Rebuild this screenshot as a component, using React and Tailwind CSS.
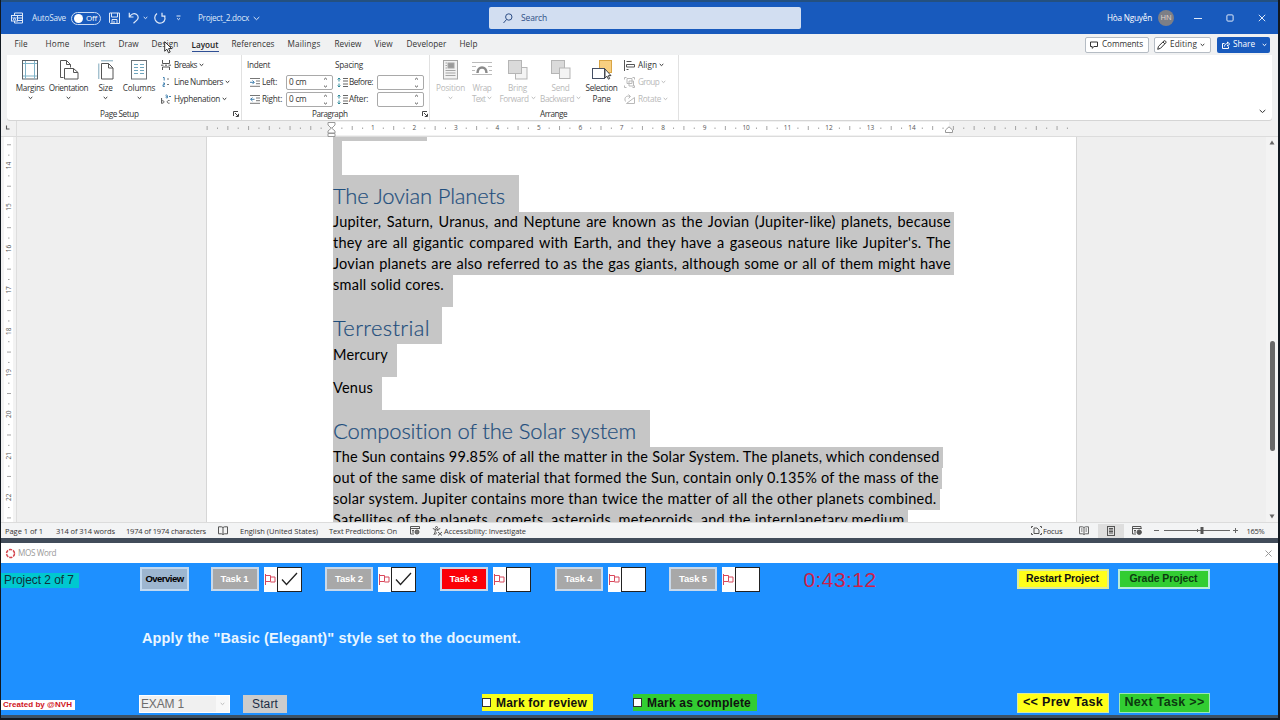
import React, { useLayoutEffect, useRef } from "react";

/* Text run whose tracking is measured so that it fills exactly `w` pixels. */
function Fit({ w, className = "", children }) {
  const ref = useRef(null);
  useLayoutEffect(() => {
    const el = ref.current;
    el.style.letterSpacing = "0px";
    const natural = el.getBoundingClientRect().width;
    el.style.letterSpacing = `${(w - natural) / el.textContent.length}px`;
  }, [w, children]);
  return (
    <span ref={ref} className={`inline-block shrink-0 whitespace-pre ${className}`}>
      {children}
    </span>
  );
}

function Icon({ w, h, className = "", children }) {
  return (
    <svg width={w} height={h} viewBox={`0 0 ${w} ${h}`} fill="none" stroke="currentColor" strokeWidth="1" className={`shrink-0 ${className}`}>
      {children}
    </svg>
  );
}

const Chevron = ({ className = "" }) => (
  <Icon w={5} h={4} className={className}>
    <path d="M0.7 1l1.8 1.6L4.3 1" />
  </Icon>
);

const Launcher = ({ className = "" }) => (
  <Icon w={6} h={6} className={`text-[#444] ${className}`}>
    <path d="M0.5 5V0.5H5M2 2l3 3M5.5 2.8v2.7H2.8" />
  </Icon>
);

function TitleBar() {
  return (
    <div className="flex h-8 items-center bg-[#185abd] text-[#dfe9f8]">
      <Icon w={12} h={12} className="ml-[10px]">
        <path d="M3.5 3V1h8v10h-8V9M5 3.5h6M7 6h4M7 8.5h4" />
        <rect x="0.5" y="3.5" width="6" height="5.5" />
        <path d="M1.8 5l.8 2.8.9-2.4.9 2.4.8-2.8" strokeWidth="0.8" />
      </Icon>
      <Fit w={34} className="ml-[9px] text-[8.2px]">AutoSave</Fit>
      <div className="ml-[5px] flex h-[13px] w-[30px] items-center rounded-full border border-[#c9daf3] pl-[2px]">
        <span className="h-[9px] w-[9px] rounded-full bg-white" />
        <Fit w={11} className="ml-[3px] text-[8px] text-white">Off</Fit>
      </div>
      <Icon w={11} h={12} className="ml-2">
        <path d="M0.5 1h10v10.5h-9L0.5 10.500zM2.500 1v4h6V1M3 11.500V7.500h5v4M5 9v2" />
      </Icon>
      <Icon w={12} h={12} className="ml-2">
        <path d="M1.300 0.800v4.200h4.200M1.500 4.800C3 2 6 0.800 8.300 2.300c2.500 1.600 2.300 4.200.6 5.800L5.500 11.300" strokeWidth="1.200" />
      </Icon>
      <Chevron className="ml-[3px]" />
      <Icon w={12} h={12} className="ml-[6px]">
        <path d="M8 0.700v3.500h3.500M3 1.500C1 3 .3 5.500 1.300 8c1.200 2.800 4.500 4 7.200 2.500 2.700-1.500 3.200-4.700 1.500-6.800" strokeWidth="1.200" />
      </Icon>
      <Icon w={5} h={6} className="ml-[10px]">
        <path d="M0.500 1h4M1 3.300l1.500 1.400L4 3.300" />
      </Icon>
      <Fit w={51} className="ml-[17px] text-[8.2px]">Project_2.docx</Fit>
      <Icon w={7} h={5} className="ml-1">
        <path d="M0.700 1l2.800 2.700L6.300 1" />
      </Icon>
      <div className="ml-[229px] flex h-[22px] w-[312px] items-center rounded-[2px] bg-[#d2def1] text-[#2f4f86]">
        <Icon w={10} h={11} className="ml-[14px]">
          <circle cx="5.800" cy="4" r="3.200" />
          <path d="M3.500 6.500L0.500 10" />
        </Icon>
        <Fit w={26} className="ml-[8px] text-[8.5px]">Search</Fit>
      </div>
      <Fit w={45} className="ml-[306px] text-[8.2px] text-white">Hòa Nguyễn</Fit>
      <div className="ml-[6px] flex h-4 w-4 items-center justify-center rounded-full bg-[#7d7f86] text-[7.5px] text-[#e2d9cf]">HN</div>
      <Icon w={8} h={8} className="ml-5">
        <path d="M0 4.500h8" />
      </Icon>
      <Icon w={8} h={8} className="ml-6">
        <rect x="0.900" y="0.900" width="6.200" height="6.200" rx="1" />
      </Icon>
      <Icon w={8} h={8} className="ml-6">
        <path d="M0.800 0.800l6.400 6.400M7.200 0.800L0.800 7.200" />
      </Icon>
    </div>
  );
}

function TabRow() {
  return (
    <div className="relative flex h-[21px] items-center bg-[#f0f1f2] text-[8.2px] text-[#333]">
      <Fit w={13} className="ml-[13.500px]">File</Fit>
      <Fit w={24} className="ml-[18px]">Home</Fit>
      <Fit w={22} className="ml-[14px]">Insert</Fit>
      <Fit w={20} className="ml-[13px]">Draw</Fit>
      <Fit w={27} className="ml-[13px]">Design</Fit>
      <div className="ml-[13px] flex h-[17px] flex-col justify-end self-end pb-[3px]">
        <Fit w={27} className="leading-[12px] font-semibold text-[#222]">Layout</Fit>
        <span className="h-[1.500px] w-[27px] bg-[#2f4f95]" />
      </div>
      <Fit w={43} className="ml-[13px]">References</Fit>
      <Fit w={33} className="ml-[13px]">Mailings</Fit>
      <Fit w={27} className="ml-[14px]">Review</Fit>
      <Fit w={18} className="ml-[13px]">View</Fit>
      <Fit w={40} className="ml-[14px]">Developer</Fit>
      <Fit w={18} className="ml-[13px]">Help</Fit>
      <div className="ml-[607.500px] flex h-4 w-16 items-center rounded-[2px] border border-[#b5bcc4] bg-white">
        <Icon w={8} h={8} className="ml-[4px]">
          <path d="M0.500 1h7v4.500H4L2.200 7.300V5.500H0.500z" />
        </Icon>
        <Fit w={41} className="ml-[4px]">Comments</Fit>
      </div>
      <div className="ml-[5px] flex h-4 w-[57px] items-center rounded-[2px] border border-[#b5bcc4] bg-white">
        <Icon w={10} h={10} className="ml-[2px]">
          <path d="M0.700 9.300l.8-3L7 .9c1-.7 2.500.7 1.900 1.800L3.500 8.300zM6 2l1.900 1.900" />
        </Icon>
        <Fit w={27} className="ml-[3px]">Editing</Fit>
        <Chevron className="ml-[3px]" />
      </div>
      <div className="ml-[6px] flex h-4 w-[53px] items-center rounded-[2px] bg-[#185abd] text-white">
        <Icon w={8} h={8} className="ml-[5px]">
          <path d="M2.500 2.500h-2v5h6V5.500M2.500 5.500C2.500 3.500 4 2.500 5.500 2.500V1l2.200 2-2.200 2V3.800" />
        </Icon>
        <Fit w={22} className="ml-[3px]">Share</Fit>
        <Chevron className="ml-[7px]" />
      </div>
      <svg width="9" height="13" viewBox="0 0 9 13" className="absolute top-[7px] left-[163px]">
        <path d="M0.700 0.700v9.500l2.200-2 1.600 3.600 1.700-.8-1.600-3.400h3z" fill="#fff" stroke="#222" strokeWidth="0.900" />
      </svg>
    </div>
  );
}

function BigButton({ className = "", icon, children }) {
  return (
    <div className={`flex shrink-0 flex-col items-center pt-[5px] leading-[11px] ${className}`}>
      <div className="flex h-[21.500px] items-start">{icon}</div>
      {children}
    </div>
  );
}

function SmallButton({ icon, label, w, className = "" }) {
  return (
    <div className={`flex h-[17.300px] items-center ${className}`}>
      {icon}
      <Fit w={w} className="ml-[3px]">{label}</Fit>
      <Chevron className="ml-[2px]" />
    </div>
  );
}

function GroupLabel({ label, w, className }) {
  return (
    <div className="flex h-3 items-center">
      <Fit w={w} className={className}>{label}</Fit>
    </div>
  );
}

function Spinner({ value }) {
  return (
    <div className="flex h-[15px] w-[47px] items-center justify-between rounded-[2px] border border-[#a9a9a9] bg-white px-[2px]">
      {value ? <Fit w={17.5}>{value}</Fit> : <span />}
      <Icon w={5} h={11} className="mr-[2px] text-[#555]">
        <path d="M1 2.500L2.500 1.200 4 2.500M1 8.700l1.500 1.300L4 8.700" />
      </Icon>
    </div>
  );
}

const IndentIcon = ({ flip }) => (
  <Icon w={10} h={9} className="text-[#777]">
    <path d="M0 0.500h10M6 3h4M6 5.700h4M0 8.300h10" />
    <path d={flip ? "M4.500 4.300H0.500M2.500 2.500L.7 4.300l1.800 1.800" : "M0 4.300h4M2.500 2.500l1.800 1.800-1.800 1.800"} stroke="#3f7fae" />
  </Icon>
);

const SpacingIcon = () => (
  <Icon w={11} h={11} className="text-[#666]">
    <path d="M6 1.500h5M6 4h5M6 7h5M6 9.500h5" />
    <path d="M2 1v3.500M2 6.500V10M.6 2.400L2 1l1.400 1.400M.6 8.600L2 10l1.400-1.400" stroke="#2f8a9a" />
  </Icon>
);

function PageSetup() {
  return (
    <div className="flex w-[235px] flex-col border-r border-[#e1e1e1]">
      <div className="flex h-[53px] text-[#333]">
        <BigButton className="ml-[5px] w-9" icon={
          <Icon w={16} h={20} className="text-[#5b6166]">
            <rect x="0.500" y="0.500" width="15" height="18.500" />
            <path d="M3.500 1v18M12.500 1v18M1 3.500h14M1 16h14" stroke="#7fb3c8" />
          </Icon>}>
          <Fit w={28.5}>Margins</Fit>
          <Chevron className="mt-[3px]" />
        </BigButton>
        <BigButton className="w-[41px]" icon={
          <Icon w={20} h={20} className="text-[#555]">
            <path d="M4.500 17.500H1.500V0.500h6l4 4v3M7.500.5v4h4" />
            <path d="M5.500 8.500h9l4.500 4v6.500H5.500zM14.500 8.500v4H19" fill="#fff" />
          </Icon>}>
          <Fit w={39.5}>Orientation</Fit>
          <Chevron className="mt-[3px]" />
        </BigButton>
        <BigButton className="w-[33px]" icon={
          <Icon w={16} h={20} className="text-[#555]">
            <path d="M3.500 3.500h7l4.500 4.500v11H3.500zM10.500 3.500v4.500H15" />
            <path d="M3 .8h12M.8 3.500V19" stroke="#7fa9bd" />
          </Icon>}>
          <Fit w={14}>Size</Fit>
          <Chevron className="mt-[3px]" />
        </BigButton>
        <BigButton className="w-[34px]" icon={
          <Icon w={16} h={20} className="text-[#6b7075]">
            <rect x="0.500" y="0.500" width="15" height="18.500" />
            <path d="M3 4.500h4M9 4.500h4M3 7.500h4M9 7.500h4M3 10.500h4M9 10.500h4M3 13.500h4M9 13.500h4" stroke="#6fa5bd" />
          </Icon>}>
          <Fit w={32.5}>Columns</Fit>
          <Chevron className="mt-[3px]" />
        </BigButton>
        <div className="ml-[5px] flex flex-col pt-[1.500px]">
          <SmallButton label="Breaks" w={23} icon={
            <Icon w={10} h={10} className="text-[#555]">
              <path d="M1.500 0v3.500h7V0M1.500 10V7h7v3M0 5.200h2.500M4 5.200h2M7.500 5.200H10" />
            </Icon>} />
          <SmallButton label="Line Numbers" w={49} icon={
            <Icon w={10} h={10} className="text-[#3f7fae]">
              <path d="M2 .5h1.200v3M2 6h1.500v1.700H2v1.700h1.800" />
              <path d="M6 2h2M6 7.500h2" stroke="#777" />
            </Icon>} />
          <SmallButton label="Hyphenation" w={46} icon={
            <Icon w={10} h={10} className="text-[#555]">
              <path d="M.6 4v5.500M.6 7c2.500-1.500 3.700 2.500 0 2.200M8.500 6.500c-3-.6-3 3.200 0 2.700" />
              <path d="M4.500 1.300c1.500-.7 2 0 2 1v1.500c-2 .5-2.400-1.300 0-1.500M8 2.500h2" stroke="#3f7fae" />
            </Icon>} />
        </div>
      </div>
      <div className="flex items-center">
        <GroupLabel label="Page Setup" w={38.5} className="ml-[93px]" />
        <Launcher className="ml-[94px]" />
      </div>
    </div>
  );
}

function Paragraph() {
  return (
    <div className="flex w-[188px] flex-col border-r border-[#e1e1e1]">
      <div className="flex h-[53px] flex-col pt-[1.500px] text-[#333]">
        <div className="flex h-[17.300px] items-center">
          <Fit w={23} className="ml-[5px]">Indent</Fit>
          <Fit w={28} className="ml-[65px]">Spacing</Fit>
        </div>
        <div className="flex h-[17.300px] items-center pl-2">
          <IndentIcon />
          <Fit w={15} className="mr-[9px] ml-[2px]">Left:</Fit>
          <Spinner value="0 cm" />
          <div className="ml-[4px] flex items-center"><SpacingIcon /></div>
          <Fit w={24} className="mr-[4px] ml-[1px]">Before:</Fit>
          <Spinner />
        </div>
        <div className="flex h-[17.300px] items-center pl-2">
          <IndentIcon flip />
          <Fit w={20} className="mr-[4px] ml-[2px]">Right:</Fit>
          <Spinner value="0 cm" />
          <div className="ml-[4px] flex items-center"><SpacingIcon /></div>
          <Fit w={19} className="mr-[9px] ml-[1px]">After:</Fit>
          <Spinner />
        </div>
      </div>
      <div className="flex items-center">
        <GroupLabel label="Paragraph" w={35.5} className="ml-[70px]" />
        <Launcher className="ml-[74px]" />
      </div>
    </div>
  );
}

function Arrange() {
  return (
    <div className="flex w-[249px] flex-col border-r border-[#e1e1e1]">
      <div className="flex h-[53px] text-[#b9b9b9]">
        <BigButton className="ml-[4px] w-[33px]" icon={
          <Icon w={15} h={20} className="text-[#a5a5a5]">
            <rect x="0.500" y="0.500" width="14" height="18.500" fill="#f2f2f2" />
            <rect x="5" y="3" width="6" height="5" fill="#9a9a9a" />
            <path d="M2.500 3h1.500M2.500 5.500h1.500M2.500 8h1.500M2.500 10.500h10M2.500 13h10M2.500 15.500h10" />
          </Icon>}>
          <Fit w={29}>Position</Fit>
          <Chevron className="mt-[3px]" />
        </BigButton>
        <BigButton className="w-[30px]" icon={
          <Icon w={20} h={18} className="text-[#bbb]">
            <path d="M0 2.500h20M0 6.500h4M16 6.500h4M0 10.500h3M17 10.500h3M0 14.500h20" />
            <path d="M5.500 13c0-7.500 9-7.500 9 0" stroke="#8a8a8a" strokeWidth="2.500" />
          </Icon>}>
          <Fit w={19}>Wrap</Fit>
          <span className="flex items-center"><Fit w={13}>Text</Fit><Chevron className="ml-[2px]" /></span>
        </BigButton>
        <BigButton className="w-[41px]" icon={
          <Icon w={20} h={20} className="text-[#b5b5b5]">
            <rect x="7.500" y="7.500" width="11.500" height="11.500" fill="#f4f4f4" />
            <rect x="0.500" y="0.500" width="13" height="13" fill="#dadada" />
          </Icon>}>
          <Fit w={19}>Bring</Fit>
          <span className="flex items-center"><Fit w={29}>Forward</Fit><Chevron className="ml-[2px]" /></span>
        </BigButton>
        <BigButton className="w-[45px]" icon={
          <Icon w={20} h={20} className="text-[#b5b5b5]">
            <rect x="0.500" y="0.500" width="13" height="13" fill="#dadada" />
            <rect x="8.500" y="8" width="10.500" height="10.500" fill="#f4f4f4" />
          </Icon>}>
          <Fit w={18}>Send</Fit>
          <span className="flex items-center"><Fit w={34}>Backward</Fit><Chevron className="ml-[2px]" /></span>
        </BigButton>
        <BigButton className="w-[37px] text-[#333]" icon={
          <Icon w={20} h={20} className="ml-[1px]">
            <rect x="7.500" y="0.500" width="12" height="12" fill="#f8cf80" stroke="#d9a545" />
            <rect x="0.500" y="8.500" width="12" height="10" fill="#fff" stroke="#444e63" />
            <path d="M13 9v9l2-1.800 1.400 3 1.300-.6-1.400-3H19z" fill="#fff" stroke="#444" />
          </Icon>}>
          <Fit w={32}>Selection</Fit>
          <Fit w={18}>Pane</Fit>
        </BigButton>
        <div className="ml-[4px] flex flex-col pt-[1.500px]">
          <SmallButton className="text-[#333]" label="Align" w={19} icon={
            <Icon w={11} h={11} className="text-[#555]">
              <path d="M0.500 0v11M2.500 1.500h5M2.500 4.500h8v2.500h-8zM2.500 9.500h2" />
            </Icon>} />
          <SmallButton label="Group" w={21} icon={
            <Icon w={11} h={11}>
              <path d="M3 1.500h5v5H3zM5 4h4.500v5H5zM0.500 2.500v-2h2M8.500.5h2v2M.5 8.500v2h2M10.500 8.500v2h-2" />
            </Icon>} />
          <SmallButton label="Rotate" w={23} icon={
            <Icon w={11} h={11}>
              <path d="M10.500 3.500v6h-8zM1.500 7.500C-.5 3.500 3 1 6 2.500M4.500.5l2 2-2 2" />
            </Icon>} />
        </div>
      </div>
      <GroupLabel label="Arrange" w={27} className="ml-[110px]" />
    </div>
  );
}

function Ribbon() {
  return (
    <div className="flex h-[66px] bg-[#f0f1f2] pl-[6px]">
      <div className="flex h-[65px] w-[1265px] rounded-b-[3px] bg-white text-[8.2px] text-[#333] shadow-[0_1px_0_#d5d5d5]">
        <PageSetup />
        <Paragraph />
        <Arrange />
        <div className="flex grow items-end justify-end pr-[6px] pb-[6px]">
          <Icon w={7} h={5}>
            <path d="M0.700 1l2.800 2.500L6.300 1" />
          </Icon>
        </div>
      </div>
    </div>
  );
}

const cm = 41.46;

function HorizontalRuler() {
  const start = 331.500;
  const quarters = [];
  for (let i = -12; i <= 71; i++) if (i !== 0 && !(i > 0 && i < 60 && i % 4 === 0)) quarters.push(i);
  return (
    <svg width="1277" height="16" viewBox="1 0 1277 16" className="block bg-[#f1f1f1]">
      <rect x="331" y="1" width="618" height="13" fill="#fff" />
      {quarters.map((i) => {
        const x = start + (i * cm) / 4;
        const long = i % 2 === 0;
        return <path key={i} d={`M${x} ${long ? 5 : 6.500}v${long ? 4 : 1.500}`} stroke="#9a9a9a" strokeWidth="0.900" />;
      })}
      {Array.from({ length: 14 }, (_, i) => (
        <text key={i} x={start + (i + 1) * cm} y="9.300" textAnchor="middle" fontSize="6.500" fill="#555">{i + 1}</text>
      ))}
      <path d="M6.500 4.500v3.500H9.500" stroke="#555" strokeWidth="1.100" fill="none" />
      <path d="M16.500 0v16" stroke="#ddd" />
      <path d="M1 15.500h1277" stroke="#dcdcdc" />
      <g fill="#fff" stroke="#999">
        <path d="M328 1.500h7v2.500L331.500 7.500 328 4z" />
        <path d="M328 12V10l3.500-3 3.500 3v2zM328 12.500h7v3h-7z" />
        <path d="M945.500 11.500V9l3.500-3.200L952.500 9v2.500z" />
      </g>
    </svg>
  );
}

function VerticalRuler() {
  const first = 28.5;
  const ticks = [];
  for (let i = -2; i < 35; i++) if (i % 4 !== 0) ticks.push(i);
  return (
    <svg width="16" height="385" viewBox="0 0 16 385" className="block shrink-0 bg-[#f3f3f3]">
      <rect x="3" width="9" height="385" fill="#fff" />
      {ticks.map((i) => {
        const y = first + (i * cm) / 4;
        const long = i % 2 === 0;
        return <path key={i} d={`M${long ? 6 : 7} ${y}h${long ? 4 : 1.500}`} stroke="#999" strokeWidth="0.900" />;
      })}
      {Array.from({ length: 9 }, (_, i) => (
        <text key={i} transform={`translate(10 ${first + i * cm}) rotate(-90)`} textAnchor="middle" fontSize="6.500" fill="#555">{i + 14}</text>
      ))}
      <path d="M15.500 0v385" stroke="#dedede" />
    </svg>
  );
}

const heading = "font-light text-[22px] leading-[22px] text-[#1f4e7d] [-webkit-text-stroke:0.2px_#1f4e7d]";
const justified = "h-[20.900px] text-justify whitespace-nowrap tracking-[0.22px] [text-align-last:justify]";

function Page() {
  return (
    <div className="flex h-[385px] w-[871px] shrink-0 flex-col items-start overflow-hidden border-x border-[#d6d6d6] bg-white pl-[126px] font-['Lato','Open_Sans',sans-serif] text-[14.5px] leading-[20px] text-black [font-variant-ligatures:none]">
      <div className="h-[4px] w-[94px] shrink-0 bg-[#c6c6c6]" />
      <div className="h-[34px] w-[9px] shrink-0 bg-[#c6c6c6]" />
      <div className={`flex h-[37px] w-[186px] shrink-0 items-end bg-[#c6c6c6] pb-[5px] ${heading}`}>
        <Fit w={172}>The Jovian Planets</Fit>
      </div>
      <div className="h-[62.500px] w-[621px] shrink-0 bg-[#c6c6c6] pr-[3px]">
        <p className={justified}>Jupiter, Saturn, Uranus, and Neptune are known as the Jovian (Jupiter-like) planets, because</p>
        <p className={justified}>they are all gigantic compared with Earth, and they have a gaseous nature like Jupiter's. The</p>
        <p className={justified}>Jovian planets are also referred to as the gas giants, although some or all of them might have</p>
      </div>
      <div className="h-[32.500px] w-[120px] shrink-0 bg-[#c6c6c6]"><Fit w={111}>small solid cores.</Fit></div>
      <div className={`flex h-[37px] w-[109px] shrink-0 items-end bg-[#c6c6c6] pb-[5px] ${heading}`}>
        <Fit w={97}>Terrestrial</Fit>
      </div>
      <div className="h-[33px] w-[64px] shrink-0 bg-[#c6c6c6] pt-[1px]"><Fit w={55}>Mercury</Fit></div>
      <div className="h-[33px] w-[49px] shrink-0 bg-[#c6c6c6] pt-[1px]"><Fit w={40}>Venus</Fit></div>
      <div className={`flex h-[37px] w-[317px] shrink-0 items-end bg-[#c6c6c6] pb-[5px] ${heading}`}>
        <Fit w={303}>Composition of the Solar system</Fit>
      </div>
      <div className="h-[21px] w-[610px] shrink-0 bg-[#c6c6c6]"><Fit w={606.5}>The Sun contains 99.85% of all the matter in the Solar System. The planets, which condensed</Fit></div>
      <div className="h-[21px] w-[609px] shrink-0 bg-[#c6c6c6]"><Fit w={606}>out of the same disk of material that formed the Sun, contain only 0.135% of the mass of the</Fit></div>
      <div className="h-[21px] w-[607px] shrink-0 bg-[#c6c6c6]"><Fit w={603.5}>solar system. Jupiter contains more than twice the matter of all the other planets combined.</Fit></div>
      <div className="h-[21px] w-[575px] shrink-0 bg-[#c6c6c6]"><Fit w={571.5}>Satellites of the planets, comets, asteroids, meteoroids, and the interplanetary medium</Fit></div>
    </div>
  );
}

function DocumentArea() {
  return (
    <div className="flex h-[385px] bg-[#efefef]">
      <VerticalRuler />
      <div className="w-[189px] shrink-0" />
      <Page />
      <div className="ml-auto flex w-[12px] shrink-0 flex-col items-center bg-[#f3f3f3] py-[3px]">
        <Icon w={6} h={5}><path d="M0.500 4.500L3 .5l2.500 4z" fill="#666" stroke="none" /></Icon>
        <span className="mt-[196px] h-[110px] w-[5px] rounded-full bg-[#686868]" />
        <Icon w={6} h={5} className="mt-auto"><path d="M0.500 0.500L3 4.500l2.500-4z" fill="#666" stroke="none" /></Icon>
      </div>
    </div>
  );
}

function StatusBar() {
  return (
    <div className="flex h-4 items-center border-t border-[#dcdcdc] bg-[#f3f4f5] text-[7.5px] leading-[10px] text-[#333]">
      <Fit w={38} className="ml-[4px]">Page 1 of 1</Fit>
      <Fit w={59} className="ml-[13px]">314 of 314 words</Fit>
      <Fit w={80} className="ml-[11px]">1974 of 1974 characters</Fit>
      <Icon w={10} h={9} className="ml-[12px] text-[#555]">
        <path d="M5 1.500L3.500.8h-3v7h3L5 8.500l1.500-.7h3v-7h-3zM5 1.500v7" />
      </Icon>
      <Fit w={78} className="ml-[12px]">English (United States)</Fit>
      <Fit w={68} className="ml-[11px]">Text Predictions: On</Fit>
      <Icon w={10} h={9} className="ml-[13px] text-[#555]">
        <path d="M9.500 3V.5h-9v7.500H4M.5 2.500h9M2 4.500h2M2 6h2" />
        <circle cx="7" cy="6" r="2" fill="#777" />
      </Icon>
      <Icon w={11} h={10} className="ml-[12px] text-[#555]">
        <circle cx="4.500" cy="1.500" r="1" />
        <path d="M0.800 2.500L4.500 4l3.700-1.500M3.200 4v2L1.800 9M5.800 4v1M4.500 6.500L3.500 8.500M6 6l4 3.500M10 6L6 9.500" />
      </Icon>
      <Fit w={82} className="ml-[1px]">Accessibility: Investigate</Fit>
      <Icon w={11} h={9} className="ml-[505px] text-[#555]">
        <path d="M3 2h3l2 2v3.500H3zM.5 2V.5H2M.5 7v1.500H2M9 .5h1.500V2M10.500 7v1.500H9" />
      </Icon>
      <Fit w={19.500} className="ml-[1px]">Focus</Fit>
      <Icon w={10} h={9} className="ml-[16px] text-[#666]">
        <path d="M5 1.500L3.500.8h-3v7h3L5 8.500l1.500-.7h3v-7h-3zM5 1.500v7M2 3h1.500M2 5h1.500M6.500 3H8M6.500 5H8" />
      </Icon>
      <div className="ml-[9px] flex h-[14px] w-[26px] items-center justify-center bg-[#dedede] text-[#555]">
        <Icon w={8} h={10}>
          <rect x="0.500" y="0.500" width="7" height="9" />
          <path d="M2 2.500h4M2 4h4M2 5.500h4M2 7h4" />
        </Icon>
      </div>
      <Icon w={10} h={9} className="ml-[8px] text-[#555]">
        <path d="M9 3V.5H.5v7.500H4M.5 2.500h9M2 4.500h2M2 6h2" />
        <circle cx="7.200" cy="6.200" r="2.200" fill="#555" />
      </Icon>
      <Icon w={84} h={9} className="ml-[12px] text-[#666]">
        <path d="M0 4.500h5M10 4.500h66M79 4.500h5M81.500 2v5M43.500 3v3" />
        <rect x="46.500" y="1" width="3" height="7" fill="#555" stroke="none" />
      </Icon>
      <Fit w={18} className="ml-[9px]">165%</Fit>
    </div>
  );
}

function TaskItem({ label, done, active, className }) {
  return (
    <div className={`flex w-[91px] shrink-0 items-center ${className}`}>
      <div className={`flex h-6 w-12 items-center justify-center border-2 border-[#c9d9ea] text-[9.500px] font-bold text-white ${active ? "bg-[#fb0007]" : "bg-[#a8a8a8]"}`}>
        <Fit w={28}>{label}</Fit>
      </div>
      <div className="ml-[5px] flex h-[25px] w-[38px] bg-white">
        <Icon w={13} h={25} className="text-[#d9485c]">
          <path d="M1.500 7v11M1.500 8.500h5v6h-5M6.500 10h4.500v5H6.500" />
        </Icon>
        <div className="flex h-[25px] w-[25px] items-center justify-center border border-[#222]">
          {done && (
            <Icon w={17} h={14} className="text-[#222]">
              <path d="M1 7.500l4.500 5L16 1" strokeWidth="1.300" />
            </Icon>
          )}
        </div>
      </div>
    </div>
  );
}

function TaskPanel() {
  const bold = "flex shrink-0 items-center font-bold text-[#111]";
  return (
    <div className="flex h-[152px] w-[1277px] flex-col bg-[#1e90ff] font-['Liberation_Sans',Arial,sans-serif]">
      <div className="flex h-8 shrink-0 items-center">
        <div className="mt-[2px] flex h-[15px] w-[78px] items-center bg-[#00c8d0] text-[12px] text-[#12303a]">
          <Fit w={70} className="ml-[3px]">Project 2 of 7</Fit>
        </div>
        <div className="ml-[61px] flex h-6 w-[49px] items-center justify-center border-2 border-[#c2d9f0] bg-[#9db6d0] text-[9.500px] font-bold text-black">
          <Fit w={38}>Overview</Fit>
        </div>
        <TaskItem label="Task 1" done className="ml-[21.500px]" />
        <TaskItem label="Task 2" done className="ml-[23.500px]" />
        <TaskItem label="Task 3" active className="ml-[23.500px]" />
        <TaskItem label="Task 4" className="ml-[24px]" />
        <TaskItem label="Task 5" className="ml-[23.500px]" />
        <Fit w={73} className="ml-[43.500px] mt-[2px] text-[21px] leading-6 text-[#cc1f4a]">0:43:12</Fit>
        <div className={`${bold} ml-[140px] h-5 w-[92px] justify-center border-2 border-[#dbeaa0] bg-[#ffff1a] text-[10.500px]`}>
          <Fit w={73}>Restart Project</Fit>
        </div>
        <div className={`${bold} ml-[9px] h-5 w-[92px] justify-center border-2 border-[#b5ecdc] bg-[#32cd32] text-[10.500px]`}>
          <Fit w={68} className="text-[#0c3a10]">Grade Project</Fit>
        </div>
      </div>
      <div className="flex h-[94px] shrink-0 items-center pb-[6px] pl-[141px] text-[14.500px] font-bold text-[#eaf6ff]">
        <Fit w={379}>Apply the "Basic (Elegant)" style set to the document.</Fit>
      </div>
      <div className="flex h-[26px] shrink-0 items-center">
        <div className="mt-[6px] flex h-[10px] w-[74px] items-center bg-white text-[8px] font-bold text-[#d0131c]">
          <Fit w={69} className="ml-[2px]">Created by @NVH</Fit>
        </div>
        <div className="mt-[3px] ml-[64px] flex h-[18px] w-[91px] items-center justify-between border border-white bg-[#f0f0f0] text-[12px] text-[#6d6d6d]">
          <Fit w={43} className="ml-[1px]">EXAM 1</Fit>
          <div className="flex h-full w-[13px] items-center justify-center bg-[#f8f8f8] text-[#bbb]"><Chevron /></div>
        </div>
        <div className="mt-[3px] ml-[13px] flex h-[18px] w-11 items-center justify-center bg-[#cccccc] text-[12px] text-[#1c2d45]">
          <Fit w={26}>Start</Fit>
        </div>
        <div className={`${bold} ml-[195px] mt-[1px] h-[17px] w-[111px] bg-[#f8ff1c] text-[12px]`}>
          <span className="h-[9px] w-[9px] border border-[#333] bg-white" />
          <Fit w={91} className="ml-[5px]">Mark for review</Fit>
        </div>
        <div className={`${bold} ml-[40px] mt-[1px] h-[17px] w-[124px] bg-[#32cd32] text-[12px]`}>
          <span className="h-[9px] w-[9px] border border-[#333] bg-white" />
          <Fit w={104} className="ml-[5px]">Mark as complete</Fit>
        </div>
        <div className={`${bold} ml-[260px] mt-[1px] h-5 w-[92px] justify-center border border-[#dbeaa0] bg-[#ffff1a] text-[12.500px]`}>
          <Fit w={80}>{"<< Prev Task"}</Fit>
        </div>
        <div className={`${bold} ml-[10px] mt-[1px] h-5 w-[91px] justify-center border border-[#9be8b8] bg-[#32cd32] text-[12.500px]`}>
          <Fit w={80} className="text-[#0c3a10]">{"Next Task >>"}</Fit>
        </div>
      </div>
    </div>
  );
}

export default function App() {
  return (
    <div className="h-[720px] w-[1280px] overflow-hidden bg-[#111820] pl-px font-['Open_Sans','Noto_Sans',sans-serif]">
      <div className="w-[1277px]">
        <div className="h-[2px] bg-[#24507f]" />
        <TitleBar />
        <TabRow />
        <Ribbon />
        <HorizontalRuler />
        <DocumentArea />
        <StatusBar />
        <div className="h-[5px] bg-[#414c5a]" />
        <div className="flex h-5 items-center bg-white">
          <Icon w={11} h={11} className="ml-[4px]">
            <circle cx="5.500" cy="5.500" r="4" stroke="#d4434b" strokeWidth="1.500" strokeDasharray="3.200 1" />
          </Icon>
          <Fit w={38} className="ml-[2px] text-[8.2px] text-[#999]">MOS Word</Fit>
          <Icon w={7} h={7} className="ml-auto mr-[6px] text-[#999]">
            <path d="M0.500 0.500l6 6M6.500 0.500l-6 6" />
          </Icon>
        </div>
        <TaskPanel />
        <div className="h-[3px] bg-[#3c5266]" />
      </div>
    </div>
  );
}
